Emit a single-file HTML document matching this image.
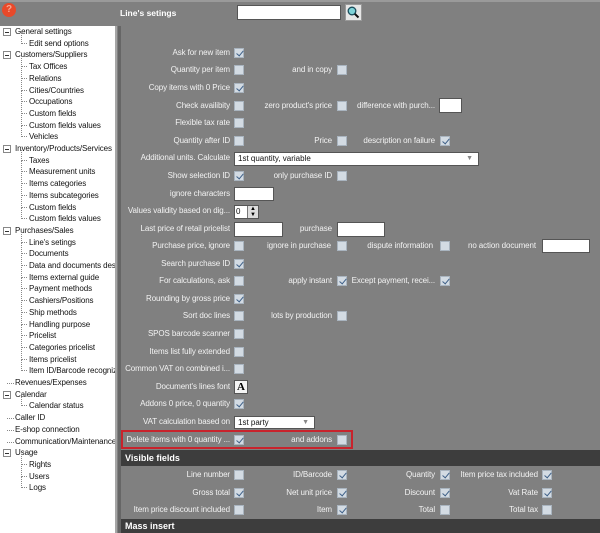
<!DOCTYPE html>
<html><head><meta charset="utf-8"><style>
*{margin:0;padding:0;box-sizing:border-box}
body{width:600px;height:533px;overflow:hidden;background:#808080;position:relative;font-family:"Liberation Sans",Arial,sans-serif;font-size:8px;color:#f2f2f2}
.a{position:absolute}
.l{position:absolute;width:300px;text-align:right;height:12px;line-height:12px;white-space:nowrap;letter-spacing:-0.1px}
.cb{position:absolute;width:10px;height:10px;background:#d3dbe3;border:1px solid #a9b4bf}
.cb.c::after{content:"";position:absolute;left:3px;top:0px;width:3px;height:6px;border:solid #3d5f87;border-width:0 1.3px 1.3px 0;transform:rotate(40deg)}
.in{position:absolute;background:#fff;border:1px solid #555}
#tree{position:absolute;left:0;top:26px;width:117px;height:507px;background:#fff;border-right:2px solid #a6a6a6;color:#111;overflow:hidden}
#tree div{position:absolute;white-space:nowrap;height:12px;line-height:12px;font-size:8px;letter-spacing:-0.1px}
.bx{position:absolute;width:8px;height:8px;border:1px solid #888;background:#fff}
.bx::after{content:"";position:absolute;left:1px;top:3px;width:4px;height:1px;background:#333}
.bar{position:absolute;left:121px;width:479px;background:#3d3d3d;color:#fff;font-weight:bold;font-size:9px;padding-left:4px}
</style></head><body>
<div class="a" style="left:0;top:0;width:600px;height:2px;background:#9a9a9a"></div>
<div class="a" style="left:2px;top:3px;width:14px;height:14px;border-radius:50%;background:#e8492a;color:#f7a48e;font-size:10px;text-align:center;line-height:14px;font-weight:bold">?</div>
<div class="a" style="left:120px;top:8px;font-weight:bold;font-size:8.5px;color:#fff">Line's setings</div>
<div class="in" style="left:237px;top:5px;width:104px;height:15px"></div>
<div class="a" style="left:345px;top:4px;width:17px;height:17px;background:#e6e6e6;border:1px solid #999"><svg width="15" height="15" viewBox="0 0 15 15"><circle cx="6" cy="6" r="3.8" fill="#7fd3d8" stroke="#1a4b5a" stroke-width="1.3"/><line x1="8.8" y1="8.8" x2="12.5" y2="12.5" stroke="#111" stroke-width="2"/></svg></div>
<div class="a" style="left:118px;top:26px;width:3px;height:507px;background:#666"></div>
<div id="tree"></div>

<div class="l" style="left:-70px;top:47px">Ask for new item</div><div class="cb c" style="left:234px;top:48px"></div>
<div class="l" style="left:-70px;top:64px">Quantity per item</div><div class="cb" style="left:234px;top:65px"></div>
<div class="l" style="left:32px;top:64px">and in copy</div><div class="cb" style="left:337px;top:65px"></div>
<div class="l" style="left:-70px;top:82px">Copy items with 0 Price</div><div class="cb c" style="left:234px;top:83px"></div>
<div class="l" style="left:-70px;top:100px">Check availibity</div><div class="cb" style="left:234px;top:101px"></div>
<div class="l" style="left:32px;top:100px">zero product's price</div><div class="cb" style="left:337px;top:101px"></div>
<div class="l" style="left:135px;top:100px">difference with purch...</div><div class="in" style="left:439px;top:98px;width:23px;height:15px"></div>
<div class="l" style="left:-70px;top:117px">Flexible tax rate</div><div class="cb" style="left:234px;top:118px"></div>
<div class="l" style="left:-70px;top:135px">Quantity after ID</div><div class="cb" style="left:234px;top:136px"></div>
<div class="l" style="left:32px;top:135px">Price</div><div class="cb" style="left:337px;top:136px"></div>
<div class="l" style="left:135px;top:135px">description on failure</div><div class="cb c" style="left:440px;top:136px"></div>
<div class="l" style="left:-70px;top:152px">Additional units. Calculate</div>
<div class="in" style="left:234px;top:152px;width:245px;height:14px;color:#111;padding-left:3px;line-height:12px">1st quantity, variable<span style="position:absolute;right:5px;top:0;color:#888;font-size:7px">▼</span></div>
<div class="l" style="left:-70px;top:170px">Show selection ID</div><div class="cb c" style="left:234px;top:171px"></div>
<div class="l" style="left:32px;top:170px">only purchase ID</div><div class="cb" style="left:337px;top:171px"></div>
<div class="l" style="left:-70px;top:188px">ignore characters</div><div class="in" style="left:234px;top:187px;width:40px;height:14px"></div>
<div class="l" style="left:-70px;top:205px">Values validity based on dig...</div>
<div class="in" style="left:234px;top:205px;width:25px;height:14px;color:#111;padding-left:1px;line-height:12px">0<span style="position:absolute;right:0;top:0;width:11px;height:12px;background:#ddd;border-left:1px solid #777;font-size:6px;line-height:6px;text-align:center;color:#000">▲<br>▼</span></div>
<div class="l" style="left:-70px;top:223px">Last price of retail pricelist</div><div class="in" style="left:234px;top:222px;width:49px;height:15px"></div>
<div class="l" style="left:32px;top:223px">purchase</div><div class="in" style="left:337px;top:222px;width:48px;height:15px"></div>
<div class="l" style="left:-70px;top:240px">Purchase price, ignore</div><div class="cb" style="left:234px;top:241px"></div>
<div class="l" style="left:31px;top:240px">ignore in purchase</div><div class="cb" style="left:337px;top:241px"></div>
<div class="l" style="left:133px;top:240px">dispute information</div><div class="cb" style="left:440px;top:241px"></div>
<div class="l" style="left:236px;top:240px">no action document</div><div class="in" style="left:542px;top:239px;width:48px;height:14px"></div>
<div class="l" style="left:-70px;top:258px">Search purchase ID</div><div class="cb c" style="left:234px;top:259px"></div>
<div class="l" style="left:-70px;top:275px">For calculations, ask</div><div class="cb" style="left:234px;top:276px"></div>
<div class="l" style="left:32px;top:275px">apply instant</div><div class="cb c" style="left:337px;top:276px"></div>
<div class="l" style="left:135px;top:275px">Except payment, recei...</div><div class="cb c" style="left:440px;top:276px"></div>
<div class="l" style="left:-70px;top:293px">Rounding by gross price</div><div class="cb c" style="left:234px;top:294px"></div>
<div class="l" style="left:-70px;top:310px">Sort doc lines</div><div class="cb" style="left:234px;top:311px"></div>
<div class="l" style="left:32px;top:310px">lots by production</div><div class="cb" style="left:337px;top:311px"></div>
<div class="l" style="left:-70px;top:328px">SPOS barcode scanner</div><div class="cb" style="left:234px;top:329px"></div>
<div class="l" style="left:-70px;top:346px">Items list fully extended</div><div class="cb" style="left:234px;top:347px"></div>
<div class="l" style="left:-70px;top:363px">Common VAT on combined i...</div><div class="cb" style="left:234px;top:364px"></div>
<div class="l" style="left:-70px;top:381px">Document's lines font</div>
<div class="a" style="left:234px;top:380px;width:14px;height:14px;background:#f4f4f4;border:1px solid #555;color:#000;font-family:'Liberation Serif',serif;font-weight:bold;font-size:11px;text-align:center;line-height:12px">A</div>
<div class="l" style="left:-70px;top:398px">Addons 0 price, 0 quantity</div><div class="cb c" style="left:234px;top:399px"></div>
<div class="l" style="left:-70px;top:416px">VAT calculation based on</div>
<div class="in" style="left:234px;top:416px;width:81px;height:13px;color:#111;padding-left:3px;line-height:11px">1st party<span style="position:absolute;right:5px;top:0;color:#888;font-size:7px">▼</span></div>
<div class="a" style="left:121px;top:430px;width:232px;height:19px;border:2px solid #c8232c"></div>
<div class="l" style="left:-70px;top:434px">Delete items with 0 quantity ...</div><div class="cb c" style="left:234px;top:435px"></div>
<div class="l" style="left:32px;top:434px">and addons</div><div class="cb" style="left:337px;top:435px"></div>

<div class="bar" style="top:450px;height:16px;line-height:16px">Visible fields</div>
<div class="l" style="left:-70px;top:469px">Line number</div><div class="cb" style="left:234px;top:470px"></div>
<div class="l" style="left:32px;top:469px">ID/Barcode</div><div class="cb c" style="left:337px;top:470px"></div>
<div class="l" style="left:135px;top:469px">Quantity</div><div class="cb c" style="left:440px;top:470px"></div>
<div class="l" style="left:238px;top:469px">Item price tax included</div><div class="cb c" style="left:542px;top:470px"></div>
<div class="l" style="left:-70px;top:487px">Gross total</div><div class="cb c" style="left:234px;top:488px"></div>
<div class="l" style="left:32px;top:487px">Net unit price</div><div class="cb c" style="left:337px;top:488px"></div>
<div class="l" style="left:135px;top:487px">Discount</div><div class="cb c" style="left:440px;top:488px"></div>
<div class="l" style="left:238px;top:487px">Vat Rate</div><div class="cb c" style="left:542px;top:488px"></div>
<div class="l" style="left:-70px;top:504px">Item price discount included</div><div class="cb" style="left:234px;top:505px"></div>
<div class="l" style="left:32px;top:504px">Item</div><div class="cb c" style="left:337px;top:505px"></div>
<div class="l" style="left:135px;top:504px">Total</div><div class="cb" style="left:440px;top:505px"></div>
<div class="l" style="left:238px;top:504px">Total tax</div><div class="cb" style="left:542px;top:505px"></div>
<div class="bar" style="top:519px;height:14px;line-height:14px">Mass insert</div>

<script>
var items=[[0,"General settings",1],[1,"Edit send options"],[0,"Customers/Suppliers",1],[1,"Tax Offices"],[1,"Relations"],[1,"Cities/Countries"],[1,"Occupations"],[1,"Custom fields"],[1,"Custom fields values"],[1,"Vehicles"],[0,"Inventory/Products/Services",1],[1,"Taxes"],[1,"Measurement units"],[1,"Items categories"],[1,"Items subcategories"],[1,"Custom fields"],[1,"Custom fields values"],[0,"Purchases/Sales",1],[1,"Line's setings"],[1,"Documents"],[1,"Data and documents desi"],[1,"Items external guide"],[1,"Payment methods"],[1,"Cashiers/Positions"],[1,"Ship methods"],[1,"Handling purpose"],[1,"Pricelist"],[1,"Categories pricelist"],[1,"Items pricelist"],[1,"Item ID/Barcode recognize"],[0,"Revenues/Expenses"],[0,"Calendar",1],[1,"Calendar status"],[0,"Caller ID"],[0,"E-shop connection"],[0,"Communication/Maintenance"],[0,"Usage",1],[1,"Rights"],[1,"Users"],[1,"Logs"]];
var t=document.getElementById('tree'),h='';
items.forEach(function(it,i){var y=i*11.7;
if(it[0]==0){ if(it[2])h+='<span class="bx" style="left:3px;top:'+(y+2)+'px"></span>';else h+='<span style="position:absolute;left:7px;top:'+(y+6)+'px;width:7px;border-top:1px dotted #888"></span>';
h+='<div style="left:15px;top:'+y+'px">'+it[1]+'</div>';}
else{h+='<span style="position:absolute;left:21px;top:'+(y-5)+'px;width:6px;height:11px;border-left:1px dotted #888;border-bottom:1px dotted #888"></span><div style="left:29px;top:'+y+'px">'+it[1]+'</div>';}
});
t.innerHTML=h;
</script>
</body></html>
